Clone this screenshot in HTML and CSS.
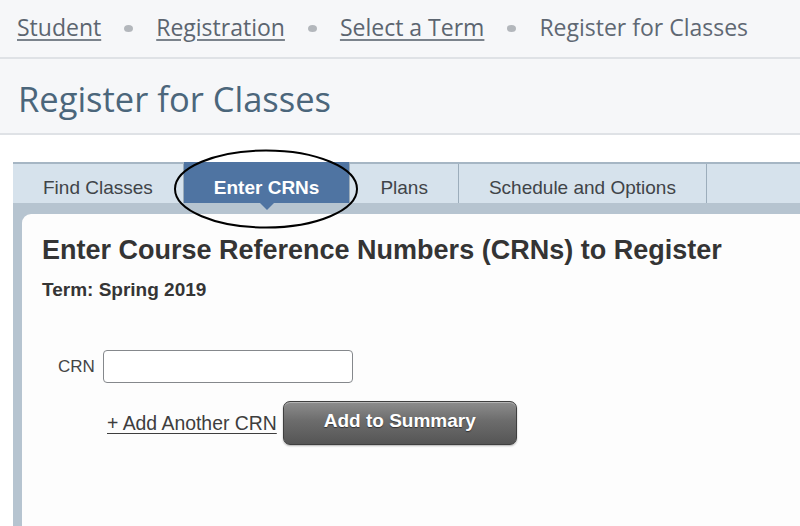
FILE: index.html
```html
<!DOCTYPE html>
<html lang="en">
<head>
<meta charset="utf-8">
<title>Register for Classes</title>
<link rel="stylesheet" href="styles.css">
</head>
<body>
<header class="top">
  <nav class="crumbs">
    <a href="#" class="crumb">Student</a>
    <span class="dot"></span>
    <a href="#" class="crumb">Registration</a>
    <span class="dot"></span>
    <a href="#" class="crumb">Select a Term</a>
    <span class="dot"></span>
    <span class="crumb current">Register for Classes</span>
  </nav>
  <h1 class="page-title">Register for Classes</h1>
</header>

<main class="main">
  <div class="panel">
    <ul class="tabs">
      <li class="tab">Find Classes</li>
      <li class="tab active">Enter CRNs</li>
      <li class="tab">Plans</li>
      <li class="tab">Schedule and Options</li>
    </ul>
    <div class="strip"></div>
    <div class="frame">
      <section class="card">
        <h2 class="card-title">Enter Course Reference Numbers (CRNs) to Register</h2>
        <p class="term">Term: Spring 2019</p>
        <div class="crn-row">
          <label class="crn-label" for="crn1">CRN</label>
          <input id="crn1" class="crn-input" type="text">
        </div>
        <div class="action-row">
          <a href="#" class="add-link">+ Add Another CRN</a>
          <button class="btn">Add to Summary</button>
        </div>
      </section>
    </div>
  </div>
  <svg class="circle-mark" width="190" height="84" viewBox="0 0 190 84" aria-hidden="true">
    <ellipse cx="95" cy="41" rx="91" ry="38.5" fill="none" stroke="#000" stroke-width="2"/>
  </svg>
</main>
</body>
</html>
```

FILE: styles.css
```css
html, body {
  margin: 0;
  padding: 0;
  background: #ffffff;
}

body {
  font-family: "Liberation Sans", Arial, sans-serif;
  height: 526px;
  overflow: hidden;
}

.top {
  background: #f6f7f9;
}

.crumbs {
  height: 59px;
  display: flex;
  align-items: center;
  gap: 23px;
  padding-left: 17px;
  border-bottom: 2px solid #dfe2e6;
  font-family: "Open Sans", sans-serif;
  font-size: 23px;
  color: #5c6570;
  white-space: nowrap;
  padding-bottom: 4px;
  box-sizing: border-box;
}

.crumb {
  color: #5c6570;
  text-decoration: underline;
  text-decoration-color: #7b838c;
  text-underline-offset: 3px;
}

.crumb.current {
  text-decoration: none;
  color: #5f6873;
}

.dot {
  width: 9px;
  height: 7px;
  border-radius: 50%;
  background: #b3b7bc;
  flex: none;
  margin-top: 4px;
}

.page-title {
  margin: 0;
  height: 76px;
  padding-left: 18px;
  display: flex;
  align-items: center;
  box-sizing: border-box;
  border-bottom: 2px solid #dfe2e6;
  font-family: "Open Sans", sans-serif;
  font-weight: 400;
  font-size: 34.5px;
  color: #4b667b;
  padding-top: 4px;
}

.main {
  position: relative;
  padding-top: 27px;
}

.panel {
  margin-left: 13px;
}

.tabs {
  list-style: none;
  margin: 0;
  padding: 0;
  display: flex;
  height: 41px;
  background: #d6e2ec;
  border-top: 2px solid #a6b6c4;
  box-sizing: border-box;
}

.tab {
  position: relative;
  display: flex;
  align-items: center;
  padding: 8px 30px 0;
  font-size: 19px;
  color: #404448;
  border-right: 1px solid #9cadbb;
  white-space: nowrap;
}

.tab.active {
  background: #4f74a2;
  color: #ffffff;
  font-weight: bold;
  margin-top: -2px;
  padding-top: 10px;
}

.tab.active::after {
  content: "";
  position: absolute;
  left: 50%;
  bottom: -7px;
  margin-left: -7px;
  border-left: 7px solid transparent;
  border-right: 7px solid transparent;
  border-top: 7px solid #4f74a2;
}

.strip {
  height: 11px;
  background: #b6c4d0;
}

.frame {
  background: #b6c4d0;
  padding-left: 9px;
  height: 320px;
}

.card {
  background: #fdfdfd;
  border-top-left-radius: 9px;
  height: 100%;
  padding: 20px 0 0 20px;
  box-sizing: border-box;
  color: #333333;
}

.card-title {
  margin: 0;
  font-size: 27px;
  line-height: 32px;
  font-weight: bold;
  color: #343434;
}

.term {
  margin: 13px 0 0;
  font-size: 19px;
  line-height: 22px;
  font-weight: bold;
  color: #353535;
}

.crn-row {
  margin-top: 49px;
  padding-left: 16px;
  display: flex;
  align-items: center;
  gap: 8px;
}

.crn-label {
  font-size: 17px;
  color: #444;
}

.crn-input {
  width: 250px;
  height: 33px;
  box-sizing: border-box;
  border: 1px solid #85888c;
  border-radius: 4px;
  background: #ffffff;
  margin: 0;
  padding: 0 6px;
  font-size: 16px;
}

.action-row {
  margin-top: 18px;
  padding-left: 65px;
  display: flex;
  align-items: center;
  gap: 6px;
}

.add-link {
  font-size: 19.4px;
  color: #3e3e3e;
  text-decoration: underline;
  text-underline-offset: 3px;
}

.btn {
  width: 234px;
  height: 44px;
  margin: 0;
  border: 1px solid #3f3f3f;
  border-radius: 7px;
  background: linear-gradient(#8d8d8d 0%, #6c6c6c 45%, #555555 100%);
  box-shadow: inset 0 1px 0 rgba(255,255,255,0.35), 0 1px 2px rgba(0,0,0,0.3);
  color: #ffffff;
  font-family: "Liberation Sans", Arial, sans-serif;
  font-weight: bold;
  font-size: 19px;
  text-shadow: 0 1px 1px rgba(0,0,0,0.5);
  padding: 0 0 4px;
}

.circle-mark {
  position: absolute;
  left: 171px;
  top: 13px;
}
```
